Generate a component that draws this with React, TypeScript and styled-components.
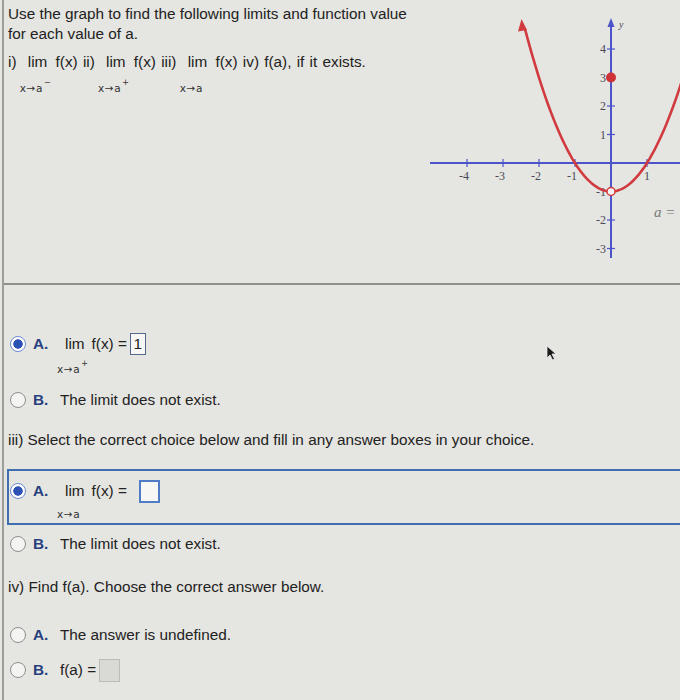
import React from 'react';
import styled, { createGlobalStyle } from 'styled-components';

const GlobalStyle = createGlobalStyle`
  html, body {
    margin: 0;
    padding: 0;
    background: #e5e5e1;
    overflow: hidden;
  }
`;

const Page = styled.div`
  position: relative;
  min-height: 700px;
  margin-left: 2px;
  border-left: 2px solid #9d9d9a;
  padding-left: 4px;
  font-family: "Liberation Sans", Arial, sans-serif;
  font-size: 15.3px;
  color: #222;
  background: #e5e5e1;
`;

const TopSection = styled.div`
  display: flex;
  height: 283px;
  margin-left: -4px;
  padding-left: 4px;
  border-bottom: 2px solid #8f8f8c;
`;

const PromptColumn = styled.div`
  flex: 1;
  padding-top: 4px;
`;

const Prompt = styled.p`
  margin: 0;
  line-height: 20px;
`;

const LimitLine = styled.p`
  margin: 8px 0 0;
  line-height: 20px;
  word-spacing: 1px;
`;

const LimStack = styled.span<{ $gap?: number; $spaced?: boolean }>`
  display: inline-flex;
  flex-direction: column;
  align-items: flex-start;
  margin: ${(p) => (p.$spaced ? '0 3px 0 6px' : '0')};
  & > span:last-child {
    margin-top: ${(p) => p.$gap ?? 10}px;
  }
`;

const LimWord = styled.span`
  line-height: inherit;
`;

const Sub = styled.span`
  margin-left: -8px;
  margin-right: -8px;
  font-family: "DejaVu Sans", "Liberation Sans", sans-serif;
  font-size: 10.5px;
  line-height: 12px;
  letter-spacing: 0.6px;
  word-spacing: 0;
  color: #333;
  white-space: nowrap;
`;

const Sup = styled.sup`
  font-size: 8px;
  vertical-align: 7px;
  line-height: 0;
  margin-left: 1px;
`;

const Graph = styled.svg`
  flex-shrink: 0;
  width: 255px;
  height: 270px;
  margin-top: 8px;
`;

const Answers = styled.div`
  padding-top: 48px;
`;

const ChoiceRow = styled.div<{ $mt?: number }>`
  display: flex;
  align-items: flex-start;
  margin-top: ${(p) => p.$mt ?? 0}px;
  padding-left: 2px;
  line-height: 22px;
`;

const Radio = styled.span<{ $on?: boolean }>`
  box-sizing: border-box;
  width: 16px;
  height: 16px;
  margin-top: 3px;
  margin-right: 7px;
  border-radius: 50%;
  flex-shrink: 0;
  border: 1.5px solid ${(p) => (p.$on ? '#6a8bd4' : '#8e8e8e')};
  background: ${(p) =>
    p.$on
      ? 'radial-gradient(circle, #2d52b6 0 4.4px, #ffffff 5px)'
      : '#f4f4f2'};
`;

const Letter = styled.span`
  min-width: 27px;
  font-weight: bold;
  color: #27407e;
`;

const Content = styled.span<{ $indent?: number }>`
  display: inline-flex;
  align-items: flex-start;
  padding-left: ${(p) => p.$indent ?? 0}px;
`;

const Eq = styled.span`
  margin-left: 7px;
`;

const AnswerBox = styled.span<{ $variant: 'filled' | 'empty' | 'disabled' }>`
  box-sizing: border-box;
  display: inline-flex;
  align-items: center;
  justify-content: center;
  min-width: ${(p) => (p.$variant === 'filled' ? 16 : 21)}px;
  height: ${(p) => (p.$variant === 'filled' ? 22 : 23)}px;
  margin-left: ${(p) => (p.$variant === 'empty' ? 12 : 3)}px;
  padding: 0 2px;
  border: ${(p) =>
    p.$variant === 'filled'
      ? '1.5px solid #54678f'
      : p.$variant === 'empty'
      ? '2px solid #4f7cc4'
      : '1px solid #bcbcba'};
  background: ${(p) => (p.$variant === 'disabled' ? '#d9d9d6' : '#f7f7f5')};
  line-height: 18px;
`;

const Instruction = styled.p<{ $mt: number }>`
  margin: ${(p) => p.$mt}px 0 0;
  line-height: 22px;
`;

const SelectedFrame = styled.div`
  margin-top: 18px;
  margin-left: -1px;
  padding: 9px 0 3px;
  border: 2px solid #3f6fae;
  border-right: none;
  & > ${ChoiceRow} {
    padding-left: 1px;
  }
`;

const Cursor = styled.svg`
  position: absolute;
  left: 542px;
  top: 345px;
  width: 11px;
  height: 16px;
`;

const X = (v: number) => 611 + 36 * v;
const Y = (v: number) => 163 - 28.5 * v;

function curvePath() {
  const pts: string[] = [];
  for (let x = -2.38; x <= 2.0; x += 0.05) {
    pts.push(`${X(x).toFixed(1)},${Y(x * x - 1).toFixed(1)}`);
  }
  return 'M' + pts.join(' L');
}

function FunctionGraph() {
  const xTicks = [-4, -3, -2, -1, 1];
  const yTicks = [4, 3, 2, 1, -1, -2, -3];
  const axis = '#4b55c9';
  const label = { fontFamily: '"Liberation Serif", "Times New Roman", serif', fontSize: 12, fill: '#4a4a55' };
  return (
    <Graph viewBox="0 0 255 270">
      <g transform="translate(-425,-8)">
        <line x1={430} y1={163} x2={680} y2={163} stroke={axis} strokeWidth={2} />
        <line x1={611} y1={24} x2={611} y2={258} stroke={axis} strokeWidth={2} />
        <polygon points="611,18 607.5,27 614.5,27" fill={axis} />
        {xTicks.map((t) => (
          <g key={t}>
            <line x1={X(t)} y1={159} x2={X(t)} y2={167} stroke={axis} strokeWidth={1.2} />
            <text x={X(t) - (t < 0 ? 3 : 0)} y={180} textAnchor="middle" style={label}>
              {t}
            </text>
          </g>
        ))}
        {yTicks.map((t) => (
          <g key={t}>
            <line x1={607} y1={Y(t)} x2={615} y2={Y(t)} stroke={axis} strokeWidth={1.2} />
            <text x={606} y={Y(t) + 4} textAnchor="end" style={label}>
              {t}
            </text>
          </g>
        ))}
        <text x={619} y={28} style={{ ...label, fontStyle: 'italic', fontSize: 10 }}>
          y
        </text>
        <path d={curvePath()} fill="none" stroke="#d13a3e" strokeWidth={2.6} strokeLinecap="round" />
        <polygon points="521.5,19 518,31.5 527,30" fill="#d13a3e" />
        <circle cx={611} cy={Y(3)} r={5} fill="#cf3338" />
        <circle cx={611} cy={Y(-1)} r={4} fill="#f6f4f2" stroke="#d13a3e" strokeWidth={1.5} />
        <text
          x={654}
          y={217}
          style={{ fontFamily: '"Liberation Serif", "Times New Roman", serif', fontStyle: 'italic', fontSize: 15, fill: '#7a7a7a' }}
        >
          a =
        </text>
      </g>
    </Graph>
  );
}

function Lim({ side, gap, spaced }: { side?: '+' | '−'; gap?: number; spaced?: boolean }) {
  return (
    <LimStack $gap={gap} $spaced={spaced}>
      <LimWord>lim</LimWord>
      <Sub>
        x→a{side && <Sup>{side}</Sup>}
      </Sub>
    </LimStack>
  );
}

export default function App() {
  return (
    <>
      <GlobalStyle />
      <Page>
        <TopSection>
          <PromptColumn>
            <Prompt>
              Use the graph to find the following limits and function value
              <br />
              for each value of a.
            </Prompt>
            <LimitLine>
              i) <Lim side="−" spaced /> f(x) ii) <Lim side="+" spaced /> f(x) iii) <Lim spaced /> f(x) iv)
              f(a), if it exists.
            </LimitLine>
          </PromptColumn>
          <FunctionGraph />
        </TopSection>

        <Answers>
          <ChoiceRow>
            <Radio $on />
            <Letter>A.</Letter>
            <Content $indent={5}>
              <Lim side="+" gap={8} />
              <Eq>f(x) =</Eq>
              <AnswerBox $variant="filled">1</AnswerBox>
            </Content>
          </ChoiceRow>
          <ChoiceRow $mt={14}>
            <Radio />
            <Letter>B.</Letter>
            <span>The limit does not exist.</span>
          </ChoiceRow>

          <Instruction $mt={18}>
            iii) Select the correct choice below and fill in any answer boxes in your choice.
          </Instruction>

          <SelectedFrame>
            <ChoiceRow>
              <Radio $on />
              <Letter>A.</Letter>
              <Content $indent={5}>
                <Lim gap={6} />
                <Eq>f(x) =</Eq>
                <AnswerBox $variant="empty" />
              </Content>
            </ChoiceRow>
          </SelectedFrame>
          <ChoiceRow $mt={8}>
            <Radio />
            <Letter>B.</Letter>
            <span>The limit does not exist.</span>
          </ChoiceRow>

          <Instruction $mt={21}>iv) Find f(a). Choose the correct answer below.</Instruction>

          <ChoiceRow $mt={26}>
            <Radio />
            <Letter>A.</Letter>
            <span>The answer is undefined.</span>
          </ChoiceRow>
          <ChoiceRow $mt={13}>
            <Radio />
            <Letter>B.</Letter>
            <Content>
              <span>f(a) =</span>
              <AnswerBox $variant="disabled" />
            </Content>
          </ChoiceRow>
        </Answers>

        <Cursor viewBox="0 0 11 16">
          <path d="M1 1 L1 13 L4 10 L6.5 15 L8.5 14 L6 9 L10 9 Z" fill="#1a1a1a" stroke="#f0f0f0" strokeWidth={0.8} />
        </Cursor>
      </Page>
    </>
  );
}
